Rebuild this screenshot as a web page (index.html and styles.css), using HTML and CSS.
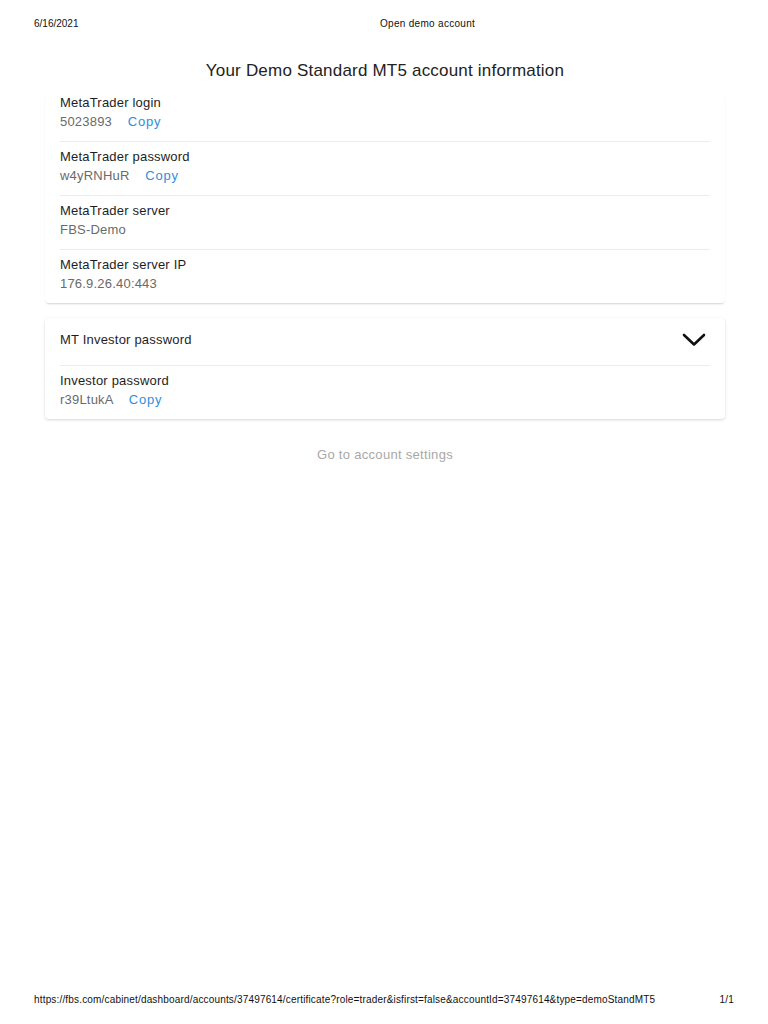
FILE: index.html
```html
<!DOCTYPE html>
<html lang="en">
<head>
    <meta charset="UTF-8">
    <meta name="viewport" content="width=device-width, initial-scale=1.0">
    <title>Open demo account</title>
    <link rel="stylesheet" href="styles.css">
</head>
<body>
    <header class="print-header">
        <div class="print-date">6/16/2021</div>
        <div class="print-title">Open demo account</div>
    </header>

    <main class="page">
        <h1 class="page-title">Your Demo Standard MT5 account information</h1>

        <section class="card card-top">
            <div class="row">
                <div class="label">MetaTrader login</div>
                <div class="value">5023893 <span class="copy">Copy</span></div>
            </div>
            <div class="row">
                <div class="label">MetaTrader password</div>
                <div class="value">w4yRNHuR <span class="copy">Copy</span></div>
            </div>
            <div class="row">
                <div class="label">MetaTrader server</div>
                <div class="value">FBS-Demo</div>
            </div>
            <div class="row">
                <div class="label">MetaTrader server IP</div>
                <div class="value">176.9.26.40:443</div>
            </div>
        </section>

        <section class="card">
            <div class="row toggle">
                <div class="label">MT Investor password</div>
                <svg class="chevron" width="24" height="14" viewBox="0 0 24 14">
                    <path d="M2 2 L12 11.5 L22 2" fill="none" stroke="#111" stroke-width="2.6" stroke-linecap="round" stroke-linejoin="round"/>
                </svg>
            </div>
            <div class="row">
                <div class="label">Investor password</div>
                <div class="value">r39LtukA <span class="copy">Copy</span></div>
            </div>
        </section>

        <a class="settings-link" href="#">Go to account settings</a>
    </main>

    <footer class="print-footer">
        <div class="print-url">https://fbs.com/cabinet/dashboard/accounts/37497614/certificate?role=trader&amp;isfirst=false&amp;accountId=37497614&amp;type=demoStandMT5</div>
        <div class="print-page">1/1</div>
    </footer>
</body>
</html>
```

FILE: styles.css
```css
html, body {
    margin: 0;
    padding: 0;
    background: #fff;
}

body {
    font-family: "Liberation Sans", Arial, sans-serif;
    color: #222;
    min-height: 1024px;
    display: flex;
    flex-direction: column;
}

.print-header {
    display: flex;
    padding: 18px 34px 0 34px;
    font-size: 10px;
    line-height: 12px;
    color: #111;
}

.print-date {
    flex: 0 0 346px;
}

.print-title {
    letter-spacing: 0.3px;
}

.page {
    width: 680px;
    margin: 0 auto;
    padding-left: 2px;
}

.page-title {
    margin: 0;
    padding-top: 30px;
    height: 33px;
    text-align: center;
    font-weight: normal;
    font-size: 17px;
    line-height: 22px;
    letter-spacing: 0.2px;
    color: #222;
}

.card {
    background: #fff;
    border-radius: 4px;
    box-shadow: 0 1px 3px rgba(0, 0, 0, 0.16);
    padding: 0 15px;
    margin-bottom: 15px;
}

.card-top {
    border-radius: 0 0 4px 4px;
    box-shadow: 0 2px 2px -1px rgba(0, 0, 0, 0.18), 1px 0 1px -1px rgba(0, 0, 0, 0.08), -1px 0 1px -1px rgba(0, 0, 0, 0.08);
}

.row {
    padding: 5px 0 10px 0;
    border-bottom: 1px solid #ececec;
}

.card-top .row:first-child {
    padding-top: 0;
}

.row:last-child {
    border-bottom: none;
}

.label {
    font-size: 13px;
    line-height: 19px;
    letter-spacing: 0.2px;
    color: #1e1e1e;
}

.value {
    font-size: 13px;
    line-height: 19px;
    letter-spacing: 0.2px;
    color: #6a6a6a;
}

.copy {
    color: #2d90db;
    letter-spacing: 0.8px;
    margin-left: 12px;
}

.toggle {
    display: flex;
    justify-content: space-between;
    align-items: center;
    height: 32px;
    padding: 5px 0 10px 0;
}

.chevron {
    margin: 2px 4px 0 0;
}

.settings-link {
    display: block;
    text-align: center;
    margin-top: 28px;
    font-size: 13px;
    letter-spacing: 0.3px;
    color: #a8a8a8;
    text-decoration: none;
}

.print-footer {
    margin-top: auto;
    display: flex;
    justify-content: space-between;
    padding: 0 34px 18px 34px;
    font-size: 10px;
    line-height: 12px;
    letter-spacing: 0.17px;
    color: #111;
}
```
